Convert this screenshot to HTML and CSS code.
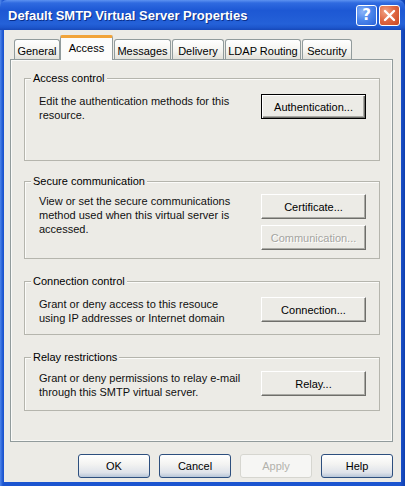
FILE: index.html
```html
<!DOCTYPE html>
<html>
<head>
<meta charset="utf-8">
<title>Default SMTP Virtual Server Properties</title>
<link rel="stylesheet" href="styles.css">
</head>
<body>
<div class="window">
  <div class="titlebar">
    <span class="title">Default SMTP Virtual Server Properties</span>
    <span class="tb-btn tb-help">?</span>
    <span class="tb-btn tb-close">
      <svg width="13" height="13" viewBox="0 0 13 13"><path d="M2 2 L11 11 M11 2 L2 11" stroke="#fff" stroke-width="2.4" stroke-linecap="round"/></svg>
    </span>
  </div>
  <div class="client">
    <div class="tabs">
      <div class="tab t-general">General</div>
      <div class="tab tab-sel t-access">Access</div>
      <div class="tab t-messages">Messages</div>
      <div class="tab t-delivery">Delivery</div>
      <div class="tab t-ldap">LDAP Routing</div>
      <div class="tab t-security">Security</div>
    </div>
    <div class="panel">
      <div class="group g1">
        <span class="group-label">Access control</span>
        <div class="group-row">
          <p class="desc">Edit the authentication methods for this resource.</p>
          <div class="btn-col">
            <button class="cbtn cbtn-default">Authentication...</button>
          </div>
        </div>
      </div>
      <div class="group g2">
        <span class="group-label">Secure communication</span>
        <div class="group-row">
          <p class="desc">View or set the secure communications method used when this virtual server is accessed.</p>
          <div class="btn-col">
            <button class="cbtn">Certificate...</button>
            <button class="cbtn cbtn-disabled">Communication...</button>
          </div>
        </div>
      </div>
      <div class="group g3">
        <span class="group-label">Connection control</span>
        <div class="group-row">
          <p class="desc">Grant or deny access to this resouce using IP addresses or Internet domain</p>
          <div class="btn-col">
            <button class="cbtn">Connection...</button>
          </div>
        </div>
      </div>
      <div class="group g4">
        <span class="group-label">Relay restrictions</span>
        <div class="group-row">
          <p class="desc">Grant or deny permissions to relay e-mail through this SMTP virtual server.</p>
          <div class="btn-col">
            <button class="cbtn">Relay...</button>
          </div>
        </div>
      </div>
    </div>
    <div class="actions">
      <button class="xbtn">OK</button>
      <button class="xbtn">Cancel</button>
      <button class="xbtn xbtn-disabled">Apply</button>
      <button class="xbtn">Help</button>
    </div>
  </div>
</div>
</body>
</html>
```
FILE: styles.css
```css
html, body {
  margin: 0;
  padding: 0;
  width: 405px;
  height: 486px;
  overflow: hidden;
  background: #1f57cf;
}

.window {
  width: 405px;
  height: 486px;
  display: flex;
  flex-direction: column;
  background: linear-gradient(to right, #4f86ea 0, #1c55d0 3px, #1c55d0 400px, #0f3fae 405px);
  font-family: "Liberation Sans", Arial, sans-serif;
  font-size: 11px;
  color: #000;
}

.titlebar {
  height: 30px;
  flex: none;
  display: flex;
  align-items: center;
  padding: 0 5px 0 8px;
  box-sizing: border-box;
  background: linear-gradient(to bottom, #5d92f0 0%, #2f6ae0 10%, #1d58d4 35%, #2461d8 80%, #1d56cc 92%, #1748b8 100%);
  border-radius: 7px 7px 0 0;
}

.title {
  flex: 1;
  color: #fff;
  font-family: "Liberation Sans", Arial, sans-serif;
  font-weight: bold;
  font-size: 13px;
  text-shadow: 1px 1px 0 #0a2f8a;
  padding-top: 1px;
}

.tb-btn {
  width: 21px;
  height: 21px;
  box-sizing: border-box;
  border: 1px solid #fff;
  border-radius: 3px;
  display: flex;
  align-items: center;
  justify-content: center;
  color: #fff;
  font-family: "DejaVu Sans", sans-serif;
  font-weight: bold;
  font-size: 15px;
  margin-left: 2px;
}

.tb-help {
  background: radial-gradient(circle at 30% 30%, #8bb4f8 0%, #4c86ec 45%, #2a62d8 100%);
}

.tb-close {
  background: radial-gradient(circle at 30% 30%, #f2a486 0%, #e06a45 45%, #c9461f 100%);
}

.client {
  flex: 1;
  margin: 0 4px 4px 4px;
  background: #ecebe6;
  padding-top: 5px;
  display: flex;
  flex-direction: column;
}

.tabs {
  display: flex;
  align-items: flex-end;
  margin-left: 10px;
  height: 24px;
  position: relative;
  z-index: 1;
}

.tab {
  height: 20px;
  box-sizing: border-box;
  border: 1px solid #919b9c;
  border-bottom: none;
  border-radius: 3px 3px 0 0;
  background: linear-gradient(to bottom, #ffffff 0%, #f3f3ef 60%, #e2e1da 100%);
  display: flex;
  align-items: center;
  justify-content: center;
  padding-top: 2px;
  margin-right: 1px;
}

.t-general { width: 46px; }
.t-messages { width: 57px; }
.t-delivery { width: 52px; }
.t-ldap { width: 76px; }
.t-security { width: 50px; }

.tab-sel {
  width: 53px;
  height: 25px;
  margin-bottom: -1px;
  margin-left: -1px;
  margin-right: 1px;
  background: #fcfcfb;
  border-top: 3px solid #f1a43a;
  padding-top: 0;
  padding-bottom: 3px;
  border-radius: 2px 2px 0 0;
}

.panel {
  margin: 0 8px 0 6px;
  height: 383px;
  box-sizing: border-box;
  border: 1px solid #919b9c;
  background: #ecebe6;
  box-shadow: inset 1px 1px 0 #fafaf8, inset -1px -1px 0 #f8f8f5;
  padding-top: 18px;
  display: flex;
  flex-direction: column;
  gap: 20px;
}

.group {
  margin: 0 12px 0 13px;
  border: 1px solid #b5b5ad;
  box-sizing: border-box;
  box-shadow: inset 1px 1px 0 #fbfbf9;
  display: flex;
  flex-direction: column;
  align-items: flex-start;
}

.g1 { height: 83px; }
.g2 { height: 78px; margin-bottom: 2px; }
.g3 { height: 54px; margin-bottom: 2px; }
.g4 { height: 54px; }

.group-label {
  margin: -7px 0 0 6px;
  padding: 0 2px;
  line-height: 13px;
  background: #ecebe6;
}

.group-row {
  align-self: stretch;
  display: flex;
  justify-content: space-between;
  padding: 9px 13px 0 14px;
}

.g2 .group-row { padding-top: 6px; }
.g4 .group-row { padding-top: 7px; }

.desc {
  margin: 0;
  width: 205px;
  line-height: 14px;
  color: #101010;
}

.btn-col {
  display: flex;
  flex-direction: column;
  gap: 6px;
}

.cbtn {
  width: 105px;
  height: 25px;
  box-sizing: border-box;
  font-family: "Liberation Sans", Arial, sans-serif;
  font-size: 11px;
  color: #000;
  background: #ecebe6;
  border: 1px solid;
  border-color: #ffffff #6e6e6a #6e6e6a #ffffff;
  box-shadow: inset -1px -1px 0 #a9a9a4;
  padding: 0;
}

.cbtn-default {
  border: 1px solid #000;
  box-shadow: inset 1px 1px 0 #fff, inset -1px -1px 0 #6e6e6a, inset -2px -2px 0 #a9a9a4;
}

.cbtn-disabled {
  color: #a4a4a0;
  text-shadow: 1px 1px 0 #fff;
}

.actions {
  display: flex;
  justify-content: flex-end;
  gap: 9px;
  margin: 12px 8px 0 0;
}

.xbtn {
  width: 72px;
  height: 24px;
  box-sizing: border-box;
  font-family: "Liberation Sans", Arial, sans-serif;
  font-size: 11px;
  color: #000;
  border: 1px solid #2d4f7e;
  border-radius: 3px;
  background: linear-gradient(to bottom, #ffffff 0%, #f4f4f2 40%, #dfe3ea 80%, #b8c6d8 100%);
  padding: 0;
}

.xbtn-disabled {
  border-color: #d6d6d0;
  background: #f6f6f4;
  color: #b2b2ac;
}
```
